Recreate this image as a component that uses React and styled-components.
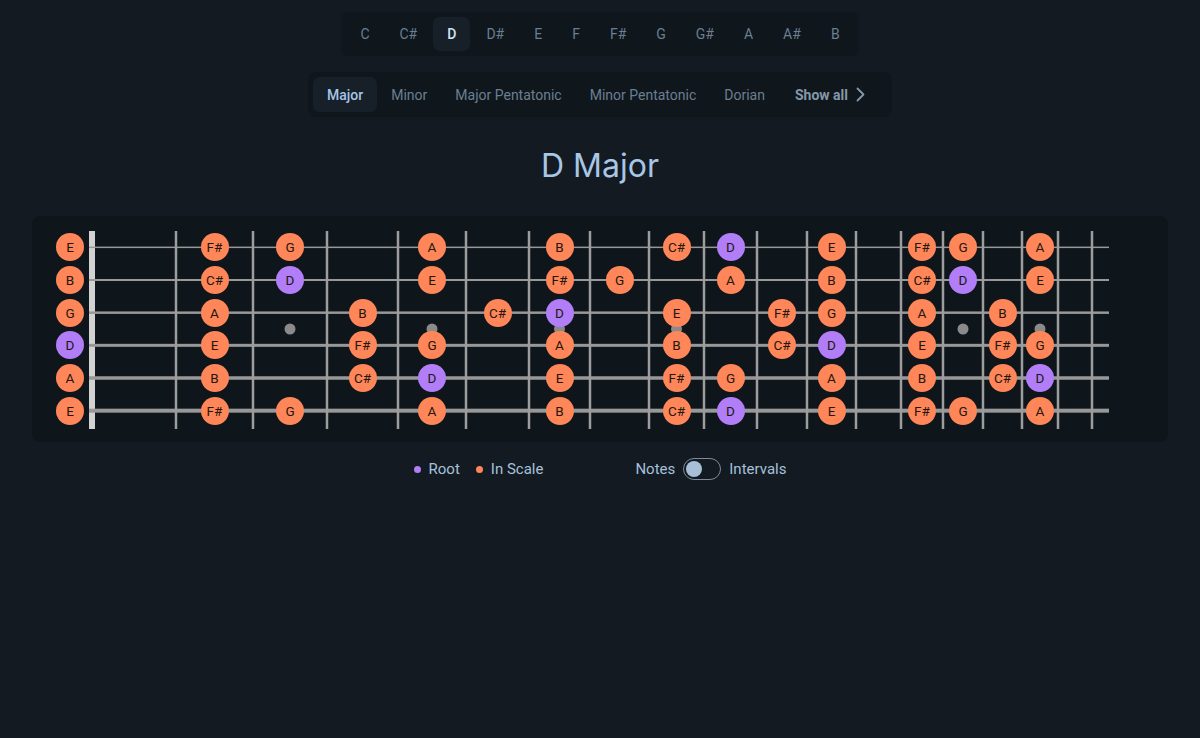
import React from 'react';
import styled, { createGlobalStyle } from 'styled-components';

const GlobalStyle = createGlobalStyle`
  html, body { margin: 0; padding: 0; background: #131a21; }
  body { font-family: Roboto, "Liberation Sans", sans-serif; -webkit-font-smoothing: antialiased; }
  * { box-sizing: border-box; }
`;

const NAMES = ['C', 'C#', 'D', 'D#', 'E', 'F', 'F#', 'G', 'G#', 'A', 'A#', 'B'];
const SCALES = ['Major', 'Minor', 'Major Pentatonic', 'Minor Pentatonic', 'Dorian'];
const ROOT = 2;
const INTERVALS = [0, 2, 4, 5, 7, 9, 11];
const TUNING = [4, 11, 7, 2, 9, 4];
const FRETS = [92, 176, 253, 327, 398, 466, 529, 590, 649, 704, 757, 807, 856, 901, 943, 983, 1022, 1058, 1092];
const ORIGIN = 48;
const OPEN_COL = 44;
const TAIL = 17;
const ROW_H = 196 / 6;
const BOARD_W = OPEN_COL + (FRETS[FRETS.length - 1] - FRETS[0]) + TAIL;
const BOARD_H = 198;
const STRING_W = [1.5, 2, 2.5, 3, 3.5, 4];
const INLAYS = [3, 5, 7, 9, 15, 17];
const MAX_FRET = 17;

const Page = styled.div`
  min-height: 738px;
  display: flex;
  flex-direction: column;
  align-items: center;
  padding: 12px 32px 0;
`;

const Segmented = styled.div`
  display: flex;
  align-items: center;
  gap: ${(p) => p.$gap}px;
  padding: 5px;
  background: #0f161c;
  border-radius: 8px;
  margin-bottom: ${(p) => p.$mb || 0}px;
`;

const SegButton = styled.button`
  all: unset;
  display: flex;
  align-items: center;
  gap: 8px;
  height: ${(p) => p.$h}px;
  padding: 0 ${(p) => p.$pr || p.$px}px 0 ${(p) => p.$px}px;
  border-radius: 7px;
  font-family: Roboto, "Liberation Sans", sans-serif;
  font-size: 14px;
  font-weight: ${(p) => (p.$bold ? 700 : p.$active ? 500 : 400)};
  color: ${(p) => (p.$active ? p.$activeColor : p.$bold ? '#8598aa' : '#6b7f91')};
  background: ${(p) => (p.$active ? '#172029' : 'transparent')};
  cursor: pointer;
`;

const Title = styled.h1`
  margin: 29px 0 30px;
  font-size: 32px;
  line-height: 40px;
  font-weight: 400;
  color: #a8c6e6;
  font-family: Inter, Roboto, sans-serif;
`;

const Card = styled.div`
  align-self: stretch;
  background: #0e151b;
  border-radius: 8px;
  padding: 15px 16px 13px;
`;

const Board = styled.div`
  position: relative;
  width: ${BOARD_W}px;
  height: ${BOARD_H}px;
  display: grid;
  grid-template-columns: ${(p) => p.$cols};
  grid-template-rows: repeat(6, ${ROW_H}px);
`;

const Drawing = styled.svg`
  position: absolute;
  left: 0;
  top: 0;
  z-index: 0;
`;

const Note = styled.div`
  grid-column: ${(p) => p.$col};
  grid-row: ${(p) => p.$row};
  justify-self: center;
  align-self: center;
  position: relative;
  z-index: 1;
  width: 28px;
  height: 28px;
  border-radius: 50%;
  display: flex;
  align-items: center;
  justify-content: center;
  background: ${(p) => (p.$root ? '#b17ef7' : '#fe8658')};
  color: #24170f;
  font-size: 13.5px;
  font-family: Roboto, sans-serif;
`;

const Footer = styled.div`
  display: flex;
  align-items: center;
  gap: 92px;
  margin-top: 16px;
  height: 22px;
`;

const Legend = styled.div`
  display: flex;
  align-items: center;
  gap: 16px;
`;

const LegendItem = styled.div`
  display: flex;
  align-items: center;
  gap: 8px;
  font-size: 15px;
  color: #a6c1dc;
`;

const Swatch = styled.span`
  width: 7px;
  height: 7px;
  border-radius: 50%;
  background: ${(p) => p.$color};
`;

const ToggleGroup = styled.div`
  display: flex;
  align-items: center;
  gap: 8px;
  font-size: 15px;
  color: #a6c1dc;
`;

const Track = styled.div`
  width: 38px;
  height: 22px;
  border-radius: 11px;
  border: 1.5px solid #7b8b9a;
  display: flex;
  align-items: center;
  padding: 0 2px;
`;

const Knob = styled.div`
  width: 16px;
  height: 16px;
  border-radius: 50%;
  background: #a7bfd7;
`;

const Chevron = () => (
  <svg width="9" height="15" viewBox="0 0 9 15" fill="none">
    <polyline points="1.5,1.5 7.5,7.5 1.5,13.5" stroke="#8598aa" strokeWidth="1.8" strokeLinecap="round" strokeLinejoin="round" />
  </svg>
);

const slotCenter = (n) => (n === 0 ? OPEN_COL / 2 : (FRETS[n - 1] + FRETS[n]) / 2 - ORIGIN);

function Fretboard() {
  const widths = [OPEN_COL];
  for (let i = 1; i < FRETS.length; i++) widths.push(FRETS[i] - FRETS[i - 1]);
  widths.push(TAIL);
  const cols = widths.map((w) => `${w}px`).join(' ');
  const nutX = FRETS[0] - ORIGIN;

  const notes = [];
  TUNING.forEach((open, s) => {
    for (let f = 0; f <= MAX_FRET; f++) {
      const n = (open + f) % 12;
      const iv = (n - ROOT + 12) % 12;
      if (INTERVALS.includes(iv)) {
        notes.push(
          <Note key={`${s}-${f}`} $col={f + 1} $row={s + 1} $root={iv === 0}>
            {NAMES[n]}
          </Note>
        );
      }
    }
  });

  return (
    <Board $cols={cols}>
      <Drawing width={BOARD_W} height={BOARD_H}>
        <rect x={nutX - 3} y={0} width={6} height={BOARD_H} fill="#d2d2d2" />
        {STRING_W.map((w, i) => (
          <rect key={i} x={nutX - 3} y={ROW_H * i + ROW_H / 2 - w / 2} width={BOARD_W - nutX + 3} height={w} fill="#989898" />
        ))}
        {FRETS.slice(1).map((x, i) => (
          <rect key={i} x={x - ORIGIN - 1.25} y={0} width={2.5} height={BOARD_H} fill="#9d9d9d" />
        ))}
        {INLAYS.map((f) => (
          <circle key={f} cx={slotCenter(f)} cy={ROW_H * 3} r={5.5} fill="#8a8a8a" />
        ))}
      </Drawing>
      {notes}
    </Board>
  );
}

export default function App() {
  return (
    <>
      <GlobalStyle />
      <Page>
        <Segmented $mb={16} $gap={2}>
          {NAMES.map((n) => (
            <SegButton key={n} $h={34} $px={14} $active={n === 'D'} $activeColor="#d3e3f3">
              {n}
            </SegButton>
          ))}
        </Segmented>
        <Segmented $gap={0}>
          {SCALES.map((s) => (
            <SegButton key={s} $h={35} $px={14} $active={s === 'Major'} $activeColor="#a6c5e5">
              {s}
            </SegButton>
          ))}
          <SegButton $h={35} $px={16} $pr={22} $bold>
            Show all
            <Chevron />
          </SegButton>
        </Segmented>
        <Title>D Major</Title>
        <Card>
          <Fretboard />
        </Card>
        <Footer>
          <Legend>
            <LegendItem>
              <Swatch $color="#b17ef7" />
              Root
            </LegendItem>
            <LegendItem>
              <Swatch $color="#fe8658" />
              In Scale
            </LegendItem>
          </Legend>
          <ToggleGroup>
            Notes
            <Track>
              <Knob />
            </Track>
            Intervals
          </ToggleGroup>
        </Footer>
      </Page>
    </>
  );
}
